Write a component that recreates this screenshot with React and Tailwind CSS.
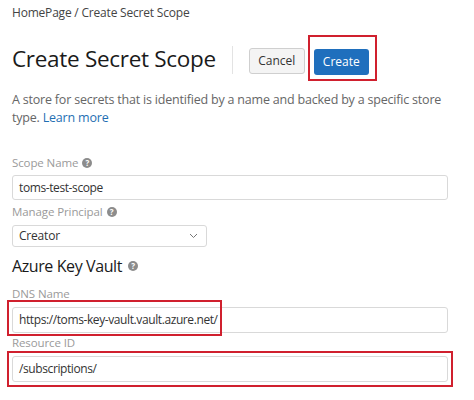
import React from "react";

const font = { fontFamily: '"Open Sans", "Noto Sans", sans-serif' };

function HelpDot({ size = "w-[10px] h-[10px]" }) {
	return (
		<span
			className={`inline-flex ${size} items-center justify-center rounded-full bg-[#8c8c8c] text-white text-[8px] font-bold leading-none align-middle`}
		>
			?
		</span>
	);
}

function Label({ children }) {
	return (
		<div className="flex items-center gap-[4px] text-[11.5px] tracking-[-0.1px] leading-[16px] text-[#9a9a9a]">
			{children}
		</div>
	);
}

function TextBox({ value, className = "" }) {
	return (
		<div
			className={`flex items-center w-[436px] rounded-[3px] border border-[#d9d9d9] bg-white px-[6px] text-[12px] tracking-[-0.4px] text-[#333] ${className}`}
		>
			{value}
		</div>
	);
}

export default function App() {
	return (
		<div className="w-[474px] h-[400px] bg-white overflow-hidden pl-[12px]" style={font}>
			<div className="pt-[4px] text-[12px] tracking-[-0.2px] leading-[18px] text-[#444]">
				HomePage / Create Secret Scope
			</div>

			<div className="mt-[23px] flex items-center h-[30px]">
				<h1 className="text-[22.5px] tracking-[-0.3px] leading-[30px] text-[#1a1a1a] -mt-[3px]">
					Create Secret Scope
				</h1>
				<div className="ml-[16px] w-px h-[28px] bg-[#e3e3e3]" />
				<button className="ml-[16px] mt-[2px] h-[26px] w-[56px] rounded-[3px] border border-[#cfcfcf] bg-[#f4f4f4] text-[12px] text-[#333]">
					Cancel
				</button>
				<div className="relative ml-[9px] mt-[2px]">
					<button className="h-[26px] w-[55px] rounded-[3px] bg-[#1f6fbd] text-[12px] text-white">
						Create
					</button>
					<div className="absolute -top-[13px] -left-[6px] -right-[8px] -bottom-[6px] border-2 border-[#d0202e]" />
				</div>
			</div>

			<p className="mt-[16px] text-[12.5px] tracking-[-0.2px] leading-[18px] text-[#666] whitespace-nowrap">
				A store for secrets that is identified by a name and backed by a specific store
				<br />
				type. <span className="text-[#1f6fb3]">Learn more</span>
			</p>

			<div className="mt-[28px]">
				<Label>
					Scope Name <HelpDot />
				</Label>
			</div>
			<TextBox value="toms-test-scope" className="mt-[4px] h-[25px]" />

			<div className="mt-[4px]">
				<Label>
					Manage Principal <HelpDot />
				</Label>
			</div>
			<div className="mt-[5px] flex items-center justify-between w-[195px] h-[22px] rounded-[3px] border border-[#d9d9d9] bg-white pl-[6px] pr-[8px] text-[12px] tracking-[-0.2px] text-[#333]">
				<span>Creator</span>
				<svg width="9" height="6" viewBox="0 0 9 6" fill="none">
					<polyline points="1,1 4.5,4.5 8,1" stroke="#777" strokeWidth="1" />
				</svg>
			</div>

			<div className="mt-[8px] flex items-center gap-[6px] h-[22px] text-[16px] tracking-[-0.4px] text-[#1a1a1a]">
				Azure Key Vault <HelpDot />
			</div>

			<div className="mt-[9px]">
				<Label>DNS Name</Label>
			</div>
			<div className="relative mt-[5px]">
				<TextBox value="https://toms-key-vault.vault.azure.net/" className="h-[26px]" />
				<div className="absolute -top-[7px] -left-[5px] w-[215px] -bottom-[3px] border-2 border-[#d0202e]" />
			</div>

			<div className="mt-[2px]">
				<Label>Resource ID</Label>
			</div>
			<div className="relative mt-[5px]">
				<TextBox value="/subscriptions/" className="h-[26px]" />
				<div className="absolute -top-[5px] -left-[5px] w-[446px] -bottom-[5px] border-2 border-[#d0202e]" />
			</div>
		</div>
	);
}
